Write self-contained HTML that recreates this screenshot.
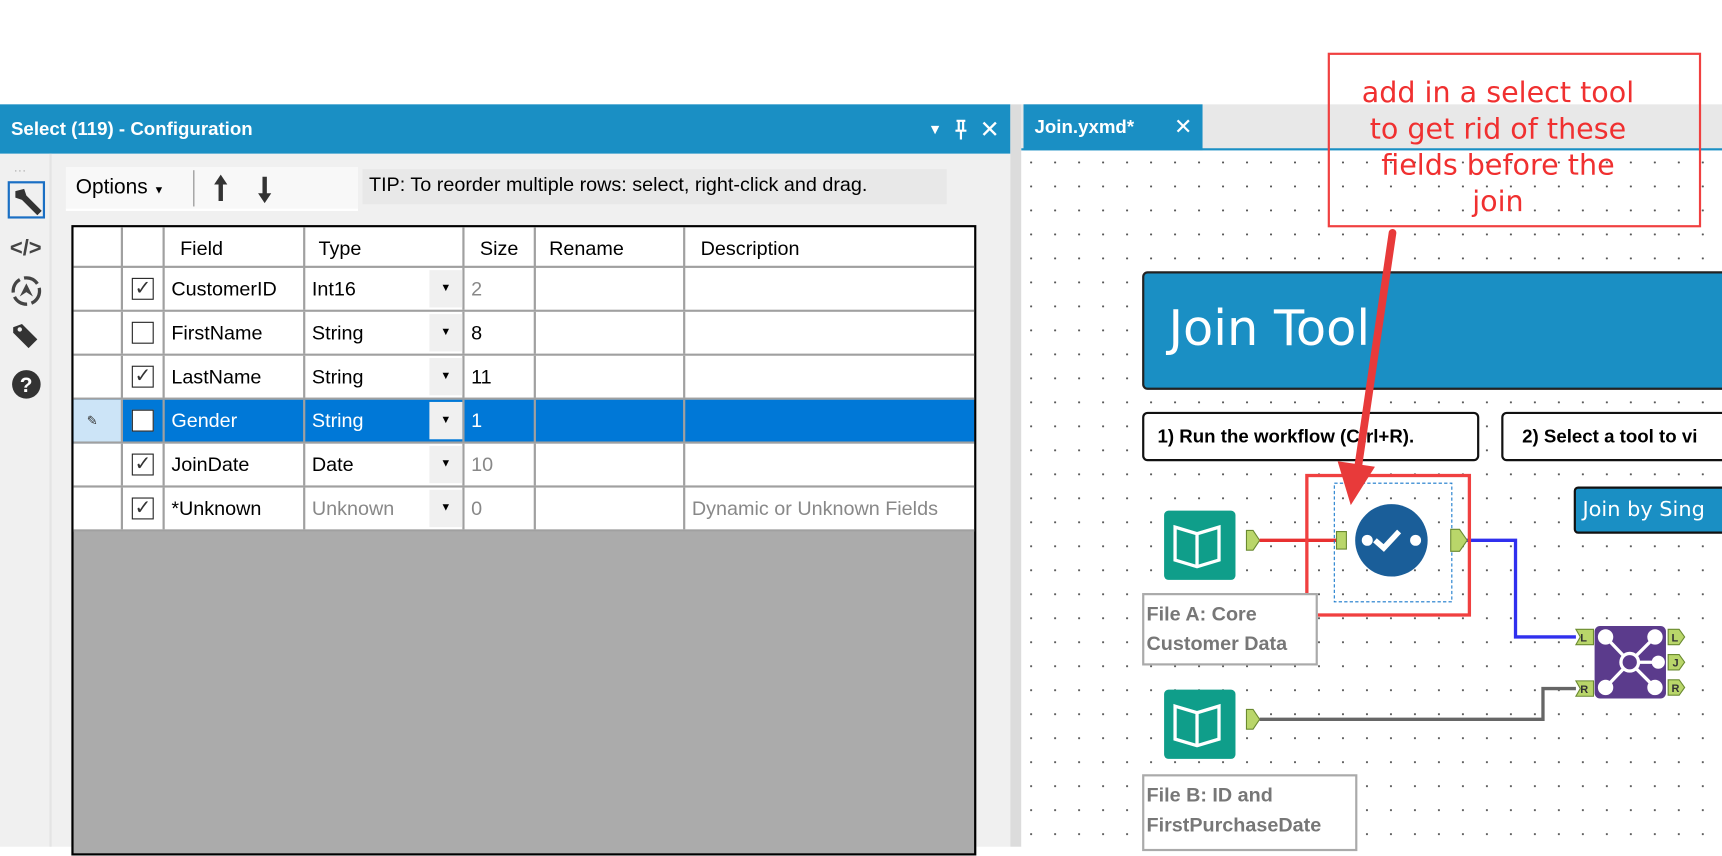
<!DOCTYPE html>
<html><head><meta charset="utf-8"><style>
html,body{margin:0;padding:0;background:#fff;overflow:hidden;width:1722px;height:847px}
#w{position:absolute;left:0;top:0;width:1568px;height:771px;transform:scale(1.0982);transform-origin:0 0;font-family:"Liberation Sans",sans-serif}
.a{position:absolute}
.hdr{left:0;top:95px;width:920px;height:45px;background:#1a8fc4;color:#fff;font-weight:bold;font-size:17px;line-height:45px}
.lp{left:0;top:140px;width:920px;height:631px;background:#f0f0f0}
.grid{left:65px;top:205px;width:820px;height:570px;border:2px solid #000;background:#ababab}
.row{position:absolute;left:0;width:820px;height:40px;background:#fff;border-bottom:2px solid #a0a0a0;box-sizing:border-box;font-size:18px;line-height:38px;color:#000}
.c{position:absolute;top:0;height:38px;border-right:2px solid #a0a0a0;box-sizing:border-box;padding-left:6px;white-space:nowrap}
.cb{position:absolute;left:8px;top:9px;width:20px;height:20px;border:1.5px solid #222;background:#fff;box-sizing:border-box;font-size:18px;line-height:17px;text-align:center;color:#333}
.dd{position:absolute;left:113px;top:2px;width:30px;height:34px;background:#f0f0f0;font-size:10px;text-align:center;line-height:34px}
.canvas{left:930px;top:137px;width:638px;height:634px;background-color:#fff;background-image:radial-gradient(circle,#555 0.8px,transparent 1.1px);background-size:21.85px 21.85px;background-position:-2px 0}
.bold{font-family:"Liberation Sans",sans-serif;font-weight:bold}
</style></head><body><div id="w">
<div class="a hdr"><span style="margin-left:10px">Select (119) - Configuration</span>
<span class="a" style="left:845px;top:0;font-size:13px">▼</span>
<svg class="a" style="left:868px;top:13px" width="14" height="20"><path d="M3 2h8M5 2v9M9 2v9M2 11h10M7 11v8" stroke="#fff" stroke-width="2" fill="none"/></svg>
<span class="a" style="left:892px;top:0;font-size:22px;font-weight:normal">✕</span></div>
<div class="a lp"></div>
<div class="a" style="left:45px;top:140px;width:2px;height:631px;background:#e4e4e4"></div>
<div class="a" style="left:13px;top:148px;font-size:10px;color:#999;letter-spacing:1px">...</div>
<div class="a" style="left:7px;top:165px;width:34px;height:34px;border:2px solid #1a6fc4;box-sizing:border-box"></div>
<svg class="a" style="left:0;top:160px" width="46" height="210">
<path d="M14 14 l8 -2 2 6 14 14 -4 4 -14 -14 -6 -2z" fill="#333"/>
<text x="9" y="72" font-size="20" font-weight="bold" fill="#444" font-family="Liberation Sans">&lt;/&gt;</text>
<circle cx="24" cy="105" r="12" fill="none" stroke="#444" stroke-width="3" stroke-dasharray="14 4"/><path d="M18 110 l6 -12 6 12 -6 -4z" fill="#444"/>
<path d="M12 138 l8 -3 14 14 -8 8 -14 -14z" fill="#333"/><circle cx="18" cy="140" r="2" fill="#f0f0f0"/>
<circle cx="24" cy="190" r="13" fill="#333"/><text x="18" y="197" font-size="19" font-weight="bold" fill="#fff" font-family="Liberation Sans">?</text>
</svg>
<div class="a" style="left:60px;top:152px;width:266px;height:38px;background:#f8f8f8;border-bottom:2px solid #fff"></div>
<div class="a" style="left:69px;top:160px;font-size:19px">Options <span style="font-size:10px">▼</span></div>
<div class="a" style="left:176px;top:155px;width:1px;height:33px;background:#888"></div>
<svg class="a" style="left:193px;top:158px" width="70" height="28"><g fill="#333"><path d="M8 1 L14 10 H10 V25 H6 V10 H2z"/><path d="M48 27 L54 18 H50 V3 H46 V18 H42z"/></g></svg>
<div class="a" style="left:330px;top:154px;width:532px;height:32px;background:#e8e8e8"></div>
<div class="a" style="left:336px;top:158px;font-size:18px">TIP: To reorder multiple rows: select, right-click and drag.</div>
<div class="a grid">
<div class="row" style="top:0;height:37px">
<div class="c" style="left:0;width:45px"></div><div class="c" style="left:45px;width:38px"></div>
<div class="c" style="left:83px;width:128px;padding-left:14px">Field</div><div class="c" style="left:211px;width:145px;padding-left:12px">Type</div>
<div class="c" style="left:356px;width:65px;padding-left:14px">Size</div><div class="c" style="left:421px;width:136px;padding-left:12px">Rename</div>
<div class="c" style="left:557px;width:263px;border:0;padding-left:14px">Description</div></div>
<div class="row" style="top:37px"><div class="c" style="left:0;width:45px"></div><div class="c" style="left:45px;width:38px"><div class="cb">✓</div></div><div class="c" style="left:83px;width:128px">CustomerID</div><div class="c" style="left:211px;width:145px">Int16<div class="dd">▼</div></div><div class="c" style="left:356px;width:65px;color:#888">2</div><div class="c" style="left:421px;width:136px"></div></div>
<div class="row" style="top:77px"><div class="c" style="left:0;width:45px"></div><div class="c" style="left:45px;width:38px"><div class="cb"></div></div><div class="c" style="left:83px;width:128px">FirstName</div><div class="c" style="left:211px;width:145px">String<div class="dd">▼</div></div><div class="c" style="left:356px;width:65px">8</div><div class="c" style="left:421px;width:136px"></div></div>
<div class="row" style="top:117px"><div class="c" style="left:0;width:45px"></div><div class="c" style="left:45px;width:38px"><div class="cb">✓</div></div><div class="c" style="left:83px;width:128px">LastName</div><div class="c" style="left:211px;width:145px">String<div class="dd">▼</div></div><div class="c" style="left:356px;width:65px">11</div><div class="c" style="left:421px;width:136px"></div></div>
<div class="row" style="top:157px;background:#0078d7;color:#fff"><div class="c" style="left:0;width:45px;background:#cce4f7;color:#333;font-size:12px;padding-left:12px">✎</div><div class="c" style="left:45px;width:38px"><div class="cb"></div></div><div class="c" style="left:83px;width:128px">Gender</div><div class="c" style="left:211px;width:145px">String<div class="dd" style="color:#000">▼</div></div><div class="c" style="left:356px;width:65px">1</div><div class="c" style="left:421px;width:136px"></div></div>
<div class="row" style="top:197px"><div class="c" style="left:0;width:45px"></div><div class="c" style="left:45px;width:38px"><div class="cb">✓</div></div><div class="c" style="left:83px;width:128px">JoinDate</div><div class="c" style="left:211px;width:145px">Date<div class="dd">▼</div></div><div class="c" style="left:356px;width:65px;color:#888">10</div><div class="c" style="left:421px;width:136px"></div></div>
<div class="row" style="top:237px"><div class="c" style="left:0;width:45px"></div><div class="c" style="left:45px;width:38px"><div class="cb">✓</div></div><div class="c" style="left:83px;width:128px">*Unknown</div><div class="c" style="left:211px;width:145px;color:#888">Unknown<div class="dd" style="color:#000">▼</div></div><div class="c" style="left:356px;width:65px;color:#888">0</div><div class="c" style="left:421px;width:136px"></div><div class="c" style="left:557px;width:263px;border:0;color:#888;padding-left:6px">Dynamic or Unknown Fields</div></div>
</div>
<div class="a" style="left:920px;top:95px;width:10px;height:676px;background:#dcdcdc"></div>
<div class="a" style="left:930px;top:95px;width:638px;height:42px;background:#e8e8e8;border-bottom:2px solid #1a8fc4;box-sizing:border-box"></div>
<div class="a" style="left:932px;top:95px;width:163px;height:42px;background:#1a8fc4;color:#fff;font-size:17px;line-height:42px" ><span class="bold" style="margin-left:10px;font-size:17px">Join.yxmd*</span><span style="position:absolute;left:137px;font-size:20px">✕</span></div>
<div class="a canvas"></div>
<div class="a" style="left:1040px;top:247px;width:540px;height:108px;background:#1a8fc4;border:2px solid #222;border-radius:5px;box-sizing:border-box"></div>
<div class="a" style="left:1064px;top:272px;color:#fff;font-size:45px;font-family:'DejaVu Sans',sans-serif">Join Tool</div>
<div class="a bold" style="left:1040px;top:375px;width:307px;height:45px;border:2px solid #111;border-radius:5px;box-sizing:border-box;background:#fff;font-size:17px;line-height:41px;padding-left:12px">1) Run the workflow (Ctrl+R).</div>
<div class="a bold" style="left:1367px;top:375px;width:220px;height:45px;border:2px solid #111;border-radius:5px;box-sizing:border-box;background:#fff;font-size:17px;line-height:41px;padding-left:17px;white-space:nowrap;overflow:hidden">2) Select a tool to vi</div>
<div class="a" style="left:1433px;top:443px;width:150px;height:43px;background:#1a8fc4;border:2px solid #111;border-radius:4px;box-sizing:border-box;color:#fff;font-size:19px;line-height:39px;padding-left:6px;font-family:'DejaVu Sans',sans-serif;white-space:nowrap;overflow:hidden">Join by Sing</div>
<svg class="a" style="left:930px;top:137px" width="638" height="634">
<g fill="#0f9e8a"><rect x="130" y="328" width="65" height="63" rx="4"/><rect x="130" y="491" width="65" height="63" rx="4"/></g>
<g fill="none" stroke="#fff" stroke-width="3"><path d="M140 343 l20 6 20-6 v30 l-20 6-20-6z M160 349v30"/><path d="M140 506 l20 6 20-6 v30 l-20 6-20-6z M160 512v30"/></g>
<path d="M205 346 h6 l6 9 -6 9 h-6z M205 509 h6 l6 9 -6 9 h-6z" fill="#b9d66a" stroke="#6a8a30"/>
<path d="M217 355 H287" stroke="#e83030" stroke-width="3"/>
<path d="M287 347 h9 v16 h-9z" fill="#b9d66a" stroke="#6a8a30"/>
<path d="M217 518 H475 V490 H505" stroke="#666" stroke-width="3" fill="none"/>
<path d="M400 355 H450 V443 H505" stroke="#3030ee" stroke-width="3" fill="none"/>
<rect x="285" y="303" width="107" height="108" fill="none" stroke="#1a7acc" stroke-dasharray="3 2"/>
<circle cx="337" cy="355" r="33" fill="#1a5e99"/>
<g fill="#fff"><circle cx="315" cy="355" r="5"/><circle cx="359" cy="355" r="5"/></g><path d="M322 355 l8 7 14-15" stroke="#fff" stroke-width="5" fill="none"/>
<path d="M391 345 h8 l7 10 -7 10 h-8z" fill="#b9d66a" stroke="#6a8a30"/>
<rect x="260" y="296" width="148" height="127" fill="none" stroke="#f04040" stroke-width="3"/>
<rect x="522" y="433" width="65" height="66" rx="5" fill="#5b3b8c"/>
<g stroke="#fff" stroke-width="3" fill="none"><path d="M532 443 L554 466 L532 489 M554 466 L577 443 M554 466 L577 489 M554 466 H578"/></g>
<g fill="#fff"><circle cx="532" cy="443" r="7"/><circle cx="577" cy="443" r="7"/><circle cx="532" cy="489" r="7"/><circle cx="577" cy="489" r="7"/><circle cx="580" cy="466" r="6"/></g><circle cx="554" cy="466" r="8" fill="#5b3b8c" stroke="#fff" stroke-width="3"/>
<g fill="#b9d66a" stroke="#6a8a30"><path d="M505 436 h16 v14 h-16 l4-7z"/><path d="M505 483 h16 v14 h-16 l4-7z"/><path d="M589 436 h10 l5 7 -5 7 h-10z"/><path d="M589 459 h10 l5 7 -5 7 h-10z"/><path d="M589 482 h10 l5 7 -5 7 h-10z"/></g>
<g font-size="10" font-weight="bold" fill="#333" font-family="Liberation Sans"><text x="509" y="447">L</text><text x="509" y="494">R</text><text x="592" y="447">L</text><text x="593" y="470">J</text><text x="592" y="493">R</text></g>
</svg>
<div class="a bold" style="left:1040px;top:540px;width:160px;height:66px;border:2px solid #aaa;box-sizing:border-box;background:#fff;color:#777;font-size:18px;line-height:27px;padding:4px 0 0 2px">File A: Core Customer Data</div>
<div class="a bold" style="left:1040px;top:705px;width:196px;height:70px;border:2px solid #aaa;box-sizing:border-box;background:#fff;color:#777;font-size:18px;line-height:27px;padding:4px 0 0 2px">File B: ID and FirstPurchaseDate</div>
<div class="a" style="left:1209px;top:48px;width:340px;height:159px;border:2px solid #f04040;box-sizing:border-box"></div>
<div class="a" style="left:1209px;top:69px;width:310px;text-align:center;color:#f03030;font-size:26px;line-height:33px;font-family:'DejaVu Sans',sans-serif">add in a select tool<br>to get rid of these<br>fields before the<br>join</div>
<svg class="a" style="left:1200px;top:205px" width="100" height="260"><path d="M68 7 L36 225" stroke="#e83a3a" stroke-width="7" stroke-linecap="round"/><path d="M18 215 L30 255 L52 220z" fill="#e83a3a"/></svg>
</div></body></html>
